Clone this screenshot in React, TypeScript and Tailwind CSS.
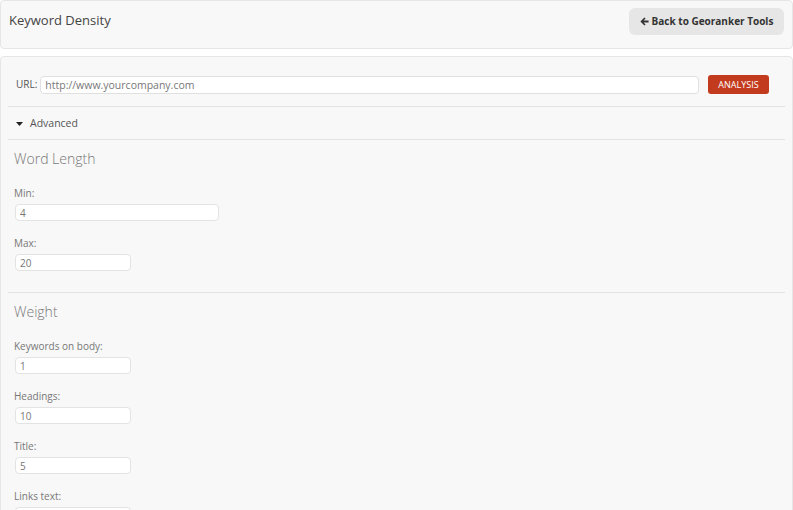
interface Field {
  label: string;
  value: string;
  wide?: boolean;
}

const wordLength: Field[] = [
  { label: "Min:", value: "4", wide: true },
  { label: "Max:", value: "20" },
];

const weight: Field[] = [
  { label: "Keywords on body:", value: "1" },
  { label: "Headings:", value: "10" },
  { label: "Title:", value: "5" },
  { label: "Links text:", value: "" },
];

function FieldBlock({ field }: { field: Field }) {
  return (
    <div className="flex flex-col">
      <label className="text-[10px] leading-[14px] text-[#777]">{field.label}</label>
      <input
        defaultValue={field.value}
        className={`mt-[4px] ml-[1px] h-[17px] rounded-[4px] border border-[#e3e3e3] bg-white px-[4px] text-[10px] text-[#777] outline-none ${
          field.wide ? "w-[204px]" : "w-[116px]"
        }`}
      />
    </div>
  );
}

function Section({ title, fields }: { title: string; fields: Field[] }) {
  return (
    <div className="border-b border-[#e2e2e2] px-[6px] pt-[9px] pb-[21px]">
      <h3 className="text-[14px] font-light leading-[20px] text-[#777]">{title}</h3>
      <div className="mt-[17px] flex flex-col gap-[15px]">
        {fields.map((f) => (
          <FieldBlock key={f.label} field={f} />
        ))}
      </div>
    </div>
  );
}

export default function App() {
  return (
    <div
      className="h-[510px] w-full overflow-hidden bg-white"
      style={{ fontFamily: '"Open Sans", "Noto Sans", sans-serif' }}
    >
      {/* Header */}
      <div className="flex h-[49px] items-center justify-between rounded-[4px] border border-[#e6e6e6] bg-[#f8f8f8] pb-[7px] pl-[8px] pr-[8px]">
        <h1 className="text-[13px] text-[#444]">Keyword Density</h1>
        <button className="flex h-[27px] w-[155px] items-center justify-center gap-[3px] rounded-[6px] bg-[#e6e6e6] text-[10px] font-bold text-[#333]">
          <svg width="9" height="9" viewBox="0 0 9 9">
            <path
              d="M4.4 0.4L0.4 4.5L4.4 8.6L5.6 7.4L3.6 5.4H8.6V3.6H3.6L5.6 1.6Z"
              fill="#333"
            />
          </svg>
          Back to Georanker Tools
        </button>
      </div>

      {/* Form */}
      <div className="mt-[7px] h-[460px] rounded-[4px] border border-[#e6e6e6] bg-[#f8f8f8] px-[7px]">
        <div className="flex h-[50px] items-center border-b border-[#e2e2e2] pt-[6px] pl-[8px] pr-[16px]">
          <span className="text-[10px] text-[#555]">URL:</span>
          <input
            placeholder="http://www.yourcompany.com"
            className="ml-[3px] h-[18px] flex-1 rounded-[4px] border border-[#e0e0e0] bg-white px-[4px] text-[10.5px] text-[#666] outline-none placeholder:text-[#777]"
          />
          <button className="ml-[9px] h-[19px] w-[61px] rounded-[3px] bg-[#c33b1e] text-[9px] text-white">
            ANALYSIS
          </button>
        </div>

        <div className="flex h-[33px] items-center gap-[7px] border-b border-[#e2e2e2] pt-[1px] pl-[8px]">
          <svg width="7" height="4" viewBox="0 0 7 4">
            <path d="M0 0h7L3.5 4z" fill="#222" />
          </svg>
          <span className="text-[10.5px] text-[#555]">Advanced</span>
        </div>

        <Section title="Word Length" fields={wordLength} />
        <Section title="Weight" fields={weight} />
      </div>
    </div>
  );
}
